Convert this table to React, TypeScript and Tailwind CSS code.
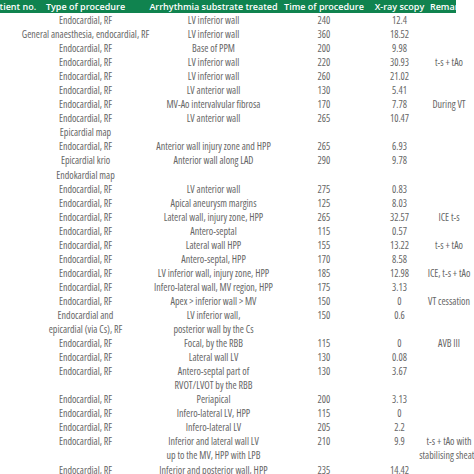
type Row = {
    proc: string[]
    site: string[]
    time?: string
    xray?: string
    remarks?: string[]
}

const rows: Row[] = [
    { proc: ['Endocardial, RF'], site: ['LV inferior wall'], time: '240', xray: '12.4' },
    { proc: ['General anaesthesia, endocardial, RF'], site: ['LV inferior wall'], time: '360', xray: '18.52' },
    { proc: ['Endocardial, RF'], site: ['Base of PPM'], time: '200', xray: '9.98' },
    { proc: ['Endocardial, RF'], site: ['LV inferior wall'], time: '220', xray: '30.93', remarks: ['t-s + tAo'] },
    { proc: ['Endocardial, RF'], site: ['LV inferior wall'], time: '260', xray: '21.02' },
    { proc: ['Endocardial, RF'], site: ['LV anterior wall'], time: '130', xray: '5.41' },
    { proc: ['Endocardial, RF'], site: ['MV-Ao intervalvular fibrosa'], time: '170', xray: '7.78', remarks: ['During VT'] },
    { proc: ['Endocardial, RF'], site: ['LV anterior wall'], time: '265', xray: '10.47' },
    { proc: ['Epicardial map'], site: [] },
    { proc: ['Endocardial, RF'], site: ['Anterior wall injury zone and HPP'], time: '265', xray: '6.93' },
    { proc: ['Epicardial krio'], site: ['Anterior wall along LAD'], time: '290', xray: '9.78' },
    { proc: ['Endokardial map'], site: [] },
    { proc: ['Endocardial, RF'], site: ['LV anterior wall'], time: '275', xray: '0.83' },
    { proc: ['Endocardial, RF'], site: ['Apical aneurysm margins'], time: '125', xray: '8.03' },
    { proc: ['Endocardial, RF'], site: ['Lateral wall, injury zone, HPP'], time: '265', xray: '32.57', remarks: ['ICE t-s'] },
    { proc: ['Endocardial, RF'], site: ['Antero-septal'], time: '115', xray: '0.57' },
    { proc: ['Endocardial, RF'], site: ['Lateral wall HPP'], time: '155', xray: '13.22', remarks: ['t-s + tAo'] },
    { proc: ['Endocardial, RF'], site: ['Antero-septal, HPP'], time: '170', xray: '8.58' },
    { proc: ['Endocardial, RF'], site: ['LV inferior wall, injury zone, HPP'], time: '185', xray: '12.98', remarks: ['ICE, t-s + tAo'] },
    { proc: ['Endocardial, RF'], site: ['Infero-lateral wall, MV region, HPP'], time: '175', xray: '3.13' },
    { proc: ['Endocardial, RF'], site: ['Apex > inferior wall > MV'], time: '150', xray: '0', remarks: ['VT cessation'] },
    { proc: ['Endocardial and', 'epicardial (via Cs), RF'], site: ['LV inferior wall,', 'posterior wall by the Cs'], time: '150', xray: '0.6' },
    { proc: ['Endocardial, RF'], site: ['Focal, by the RBB'], time: '115', xray: '0', remarks: ['AVB III'] },
    { proc: ['Endocardial, RF'], site: ['Lateral wall LV'], time: '130', xray: '0.08' },
    { proc: ['Endocardial, RF'], site: ['Antero-septal part of', 'RVOT/LVOT by the RBB'], time: '130', xray: '3.67' },
    { proc: ['Endocardial, RF'], site: ['Periapical'], time: '200', xray: '3.13' },
    { proc: ['Endocardial, RF'], site: ['Infero-lateral LV, HPP'], time: '115', xray: '0' },
    { proc: ['Endocardial, RF'], site: ['Infero-lateral LV'], time: '205', xray: '2.2' },
    { proc: ['Endocardial, RF'], site: ['Inferior and lateral wall LV', 'up to the MV, HPP with LPB'], time: '210', xray: '9.9', remarks: ['t-s + tAo with', 'stabilising sheath'] },
    { proc: ['Endocardial, RF'], site: ['Inferior and posterior wall, HPP'], time: '235', xray: '14.42' },
]

// columns are laid out so each centre sits where the reference has it
const grid = 'grid grid-cols-[45px_101px_155px_66px_85px_14px] ml-[-10px] w-[466px]'

function Cell({ lines }: { lines?: string[] }) {
    return (
        <div className="flex flex-col items-center min-w-0">
            {(lines ?? []).map((l, i) => (
                <span key={i} className="whitespace-nowrap">{l}</span>
            ))}
        </div>
    )
}

export default function App() {
    return (
        <div className="w-[474px] h-[474px] overflow-hidden bg-white font-['Open_Sans',sans-serif] [font-stretch:condensed] text-[10px] leading-[14.05px] text-[#666]">
            <div className={`${grid} h-[13px] items-center bg-[#10834f] text-[9px] font-semibold [font-stretch:normal] text-white`}>
                <Cell lines={['Patient no.']} />
                <Cell lines={['Type of procedure']} />
                <Cell lines={['Arrhythmia substrate treated']} />
                <Cell lines={['Time of procedure']} />
                <Cell lines={['X-ray scopy']} />
                <Cell lines={['Remarks']} />
            </div>
            {rows.map((r, i) => (
                <div key={i} className={grid}>
                    <Cell />
                    <Cell lines={r.proc} />
                    <Cell lines={r.site} />
                    <Cell lines={r.time ? [r.time] : []} />
                    <Cell lines={r.xray ? [r.xray] : []} />
                    <Cell lines={r.remarks} />
                </div>
            ))}
        </div>
    )
}
